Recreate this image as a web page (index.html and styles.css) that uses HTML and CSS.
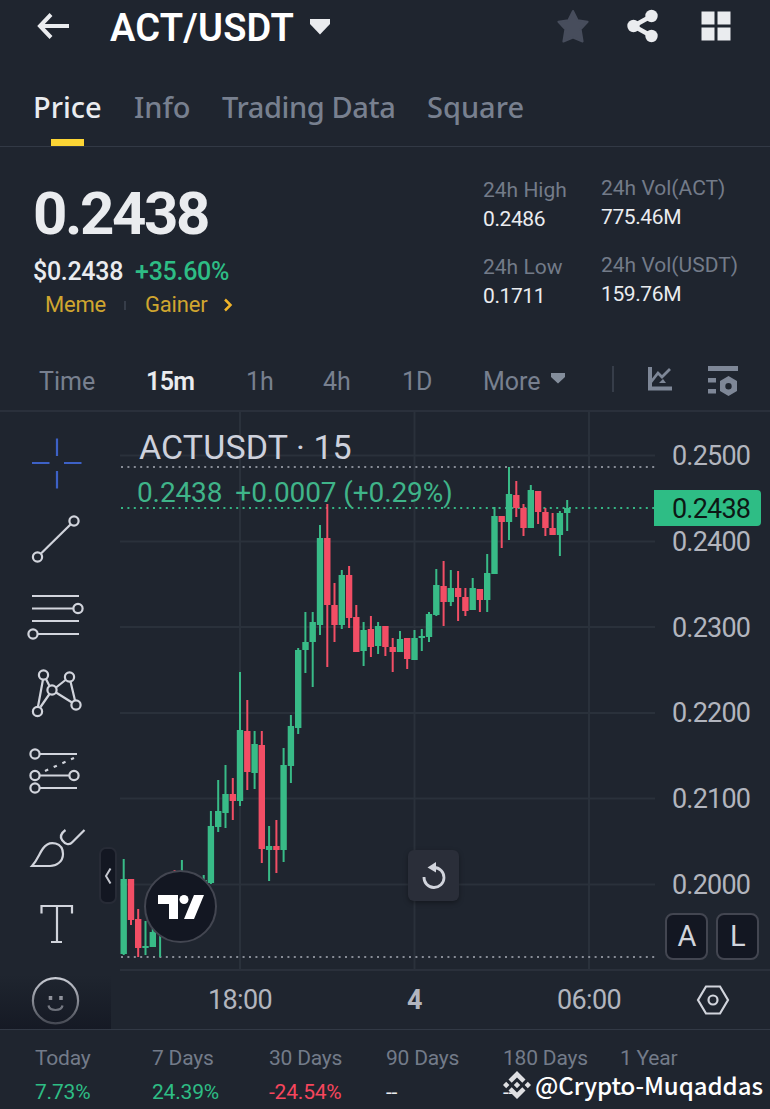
FILE: index.html
```html
<!DOCTYPE html>
<html lang="en">
<head>
  <meta charset="UTF-8">
  <meta name="viewport" content="width=device-width, initial-scale=1.0">
  <title>ACT/USDT</title>
  <link rel="stylesheet" href="styles.css">
</head>
<body>
  <header class="topbar">
    <svg class="back" width="34" height="26" viewBox="0 0 34 26"><path d="M15 1.500L4 13l11 11.500M4 13h29" fill="none" stroke="#eaecef" stroke-width="4"/></svg>
    <h1>ACT/USDT</h1>
    <svg class="caret" width="20" height="16" viewBox="0 0 20 16"><path d="M0 0h20v5L10 15.500 0 5z" fill="#eaecef"/></svg>
    <div class="actions">
      <svg width="34" height="34" viewBox="0 0 34 34"><path d="M17 2l4.600 9.300 10 1.500-7 7.400 2 12.300L17 28.500 7.400 32.500l2-12.300-7-7.400 10-1.500z" fill="#474d5c" stroke="#474d5c" stroke-width="2" stroke-linejoin="round"/></svg>
      <svg width="34" height="34" viewBox="0 0 34 34"><g fill="#eaecef"><circle cx="26.500" cy="7" r="6.200"/><circle cx="8.500" cy="17" r="6.200"/><circle cx="26.500" cy="27" r="6.200"/></g><path d="M26.500 7l-18 10 18 10" fill="none" stroke="#eaecef" stroke-width="4.500"/></svg>
      <svg width="30" height="30" viewBox="0 0 30 30" fill="#eaecef"><path d="M.5.5h13v13H.5zM16.500.5h13v13h-13zM.5 16.500h13v13H.5zM16.500 16.500h13v13h-13z"/></svg>
    </div>
  </header>

  <nav class="tabs">
    <a class="tab active">Price</a>
    <a class="tab info">Info</a>
    <a class="tab trading">Trading Data</a>
    <a class="tab square">Square</a>
  </nav>

  <section class="summary">
    <div class="price">
      <div class="last">0.2438</div>
      <div class="fiat"><span class="usd">$0.2438</span><span class="up">+35.60%</span></div>
      <div class="tags">
        <span>Meme</span><i></i><span>Gainer</span>
        <svg width="10" height="14" viewBox="0 0 10 14"><path d="M2 1.500L7.500 7 2 12.500" fill="none" stroke="#f0b429" stroke-width="2.500"/></svg>
      </div>
    </div>
    <dl class="high-low">
      <dt class="dt-high">24h High</dt><dd>0.2486</dd>
      <dt class="dt-low">24h Low</dt><dd>0.1711</dd>
    </dl>
    <dl class="volume">
      <dt>24h Vol(ACT)</dt><dd>775.46M</dd>
      <dt>24h Vol(USDT)</dt><dd>159.76M</dd>
    </dl>
  </section>

  <nav class="intervals">
    <span class="iv-time">Time</span>
    <span class="iv-15m">15m</span>
    <span class="iv-1h">1h</span>
    <span class="iv-4h">4h</span>
    <span class="iv-1d">1D</span>
    <span class="iv-more">More</span>
    <svg class="more-caret" width="14" height="11" viewBox="0 0 14 11"><path d="M0 0h14v4L7 10.500 0 4z" fill="#848e9c"/></svg>
    <i class="divider"></i>
    <svg class="indicator" width="24" height="24" viewBox="0 0 24 24"><path d="M2 0v22M0 21.500h24" fill="none" stroke="#7e8797" stroke-width="4"/><path d="M3 15l7-9 4 4 8-8" fill="none" stroke="#7e8797" stroke-width="2.800"/><path d="M11 16l4-4 3 4z" fill="#7e8797"/></svg>
    <svg width="30" height="31" viewBox="0 0 30 31"><path d="M0 0h30v5H0zM0 12h8v4.500H0zM0 23h8v4.500H0z" fill="#7e8797"/><path d="M20.500 10l8.500 5v10l-8.500 5-8.500-5V15zM20.500 17a3.200 3.200 0 100 6.400 3.200 3.200 0 000-6.400z" fill="#7e8797" fill-rule="evenodd"/></svg>
  </nav>

  <main class="chart">
    <aside class="tools">
      <svg viewBox="0 0 111 77"><path class="cross" d="M57 14.500V32M57 47v17.500M32 39h17.500M64 39h17.500"/></svg>
      <svg viewBox="0 0 111 77"><path d="M41 52.500l29.500-29"/><circle cx="37.500" cy="56" r="4.600"/><circle cx="74" cy="20" r="4.600"/></svg>
      <svg viewBox="0 0 111 77"><path d="M32 18h47M32 30.500h41.500M32 43h47M37.500 56H79"/><circle cx="78" cy="30.500" r="4.600"/><circle cx="33" cy="56" r="4.600"/></svg>
      <svg viewBox="0 0 111 77"><path d="M43 24.500L38 51.500M46 24l3.500 7M49.500 39L40.500 52M56 32.500l9.500-7.500M56 37.500l16 10M70.500 26.500L75 45.500"/><circle cx="43.500" cy="20" r="4.600"/><circle cx="69.500" cy="22" r="4.600"/><circle cx="52" cy="35" r="4.600"/><circle cx="76" cy="50" r="4.600"/><circle cx="37.500" cy="56.500" r="4.600"/></svg>
      <svg viewBox="0 0 111 77"><path d="M39.500 22H77M39.500 43.500h30M39.500 56H77"/><path d="M45 39l29-13" stroke-dasharray="3.500 6"/><circle cx="35" cy="22" r="4.600"/><circle cx="35" cy="43.500" r="4.600"/><circle cx="74" cy="43.500" r="4.600"/><circle cx="35" cy="56" r="4.600"/></svg>
      <svg viewBox="0 0 111 77"><path d="M32 57C38 50 39 45 43 39.500C50 30 63 34 63 45C63 53 56 57 50 57ZM65.500 21C60 25 60 28 62 31C65 35 69 37 72.500 33L84.500 21"/></svg>
      <svg viewBox="0 0 111 77"><path d="M41.500 27.500V20H72v7.500M57 20v36M51 56h11"/></svg>
      <svg viewBox="0 0 111 77"><circle cx="55.500" cy="37.700" r="22.600"/><path d="M48.500 42.500c1 6 13 6 14 0"/><path d="M50.500 33v4M61 33v4" stroke-width="3.500"/></svg>
    </aside>

    <div class="plot">
      <svg id="candles" viewBox="120 412 535 557">
        <path class="grid" d="M120 455.500h535M120 541.500h535M120 627h535M120 713h535M120 798.500h535M120 884.500h535M240 412v557M414.500 412v557M589 412v557"/>
        <path class="range" d="M121 467h534M121 957h534"/>
        <path class="current" d="M121 508h534"/>
      </svg>
      <div class="legend">
        <div class="symbol">ACTUSDT · 15</div>
        <div class="change"><span>0.2438</span><span>+0.0007 (+0.29%)</span></div>
      </div>
      <div class="collapse"><svg width="8" height="18" viewBox="0 0 8 18"><path d="M6.500 1.500L2 9l4.500 7.500" fill="none" stroke="#c5c8d0" stroke-width="2"/></svg></div>
      <div class="tv-logo"><svg width="46" height="24" viewBox="0 0 46 24" fill="#fff"><path d="M0 0h20v24H11V9H0z"/><circle cx="26" cy="4.500" r="4.500"/><path d="M36 0h10L36 24H26z"/></svg></div>
      <div class="reset"><svg width="26" height="28" viewBox="0 0 26 28"><path d="M3 15a10 10 0 1010-9.500" fill="none" stroke="#d1d4dc" stroke-width="2.800"/><path d="M6.500 5.500L15 0v10.500z" fill="#d1d4dc"/></svg></div>
    </div>

    <div class="price-axis">
      <span>0.2500</span><span>0.2400</span><span>0.2300</span><span>0.2200</span><span>0.2100</span><span>0.2000</span>
      <div class="scale-buttons"><b>A</b><b>L</b></div>
      <div class="current-price">0.2438</div>
    </div>

    <div class="time-axis">
      <span>18:00</span><span class="day">4</span><span>06:00</span>
    </div>
    <div class="axis-settings"><svg width="34" height="30" viewBox="0 0 34 30" fill="none" stroke="#d1d4dc" stroke-width="2.200"><path d="M10 1.500h14L32 15l-8 13.500H10L2 15z"/><circle cx="17" cy="15" r="4.500"/></svg></div>
  </main>

  <footer class="periods">
    <div><span>Today</span><b class="up">7.73%</b></div>
    <div><span>7 Days</span><b class="up">24.39%</b></div>
    <div><span>30 Days</span><b class="down">-24.54%</b></div>
    <div><span>90 Days</span><b>--</b></div>
    <div><span>180 Days</span><b>--</b></div>
    <div><span>1 Year</span><b>--</b></div>
    <div class="watermark">
      <svg width="28" height="28" viewBox="0 0 28 28" fill="#dedfe2"><path d="M14 0l8.500 8.500-3.200 3.200L14 6.400l-5.300 5.300-3.200-3.200zM14 28l8.500-8.500-3.200-3.200L14 21.600l-5.300-5.300-3.200 3.200zM3.200 10.800L6.400 14l-3.200 3.200L0 14zM24.800 10.800L28 14l-3.200 3.200-3.200-3.200zM14 10.800l3.200 3.200-3.200 3.200-3.200-3.200z"/></svg>
      <span>@Crypto-Muqaddas</span>
    </div>
  </footer>

  <script>
    // [body top, body bottom, wick top, wick bottom, up?] for each 15m candle
    const candles = [
      [879,954,859,955,1],[879,920,879,925,0],[919,948,909,957,0],[946,948,921,955,1],
      [932,947,915,947,1],[905,925,900,957,1],[900,910,895,915,0],[880,900,870,905,0],
      [878,900,860,905,1],[885,900,880,910,0],[888,900,882,910,1],[880,890,875,895,1],
      [826,883,811,884,1],[811,827,780,832,1],[794,813,765,828,1],[794,801,778,820,0],
      [730,801,672,806,1],[731,772,700,790,0],[744,773,731,789,1],[745,849,731,863,0],
      [846,850,826,881,1],[846,850,820,873,0],[765,850,748,862,1],[726,766,715,783,1],
      [650,728,648,734,1],[642,650,612,673,1],[622,642,612,687,1],[538,625,525,635,1],
      [538,605,504,667,0],[605,625,583,642,0],[575,625,570,629,1],[575,618,566,628,0],
      [617,652,605,652,0],[630,651,622,666,1],[629,647,616,657,0],[626,646,622,654,1],
      [626,647,626,656,0],[647,652,638,672,0],[639,652,631,652,1],[638,659,638,669,0],
      [638,660,630,660,1],[636,638,629,651,1],[614,637,612,642,1],[585,615,569,616,1],
      [586,602,561,626,0],[588,602,570,606,1],[588,597,571,621,0],[597,611,588,616,0],
      [588,610,578,610,1],[589,600,589,612,0],[573,600,554,612,1],[516,574,507,574,1],
      [516,522,516,548,0],[494,522,467,540,1],[495,508,481,517,0],[508,528,504,536,0],
      [490,528,485,528,1],[491,512,491,524,0],[512,528,508,536,0],[528,535,513,535,0],
      [513,535,511,556,1],[508,513,500,531,1]
    ];
    let shapes = '';
    candles.forEach((c, i) => {
      const x = 123.7 + 7.27 * i;
      shapes += `<g class="${c[4] ? 'rise' : 'fall'}">
        <rect x="${(x - 1).toFixed(1)}" y="${c[2]}" width="2" height="${c[3] - c[2]}"/>
        <rect x="${(x - 3.2).toFixed(1)}" y="${c[0]}" width="6.4" height="${c[1] - c[0]}"/></g>`;
    });
    document.getElementById('candles').innerHTML += shapes;
  </script>
</body>
</html>
```

FILE: styles.css
```css
* { box-sizing: border-box; }
body { margin: 0; width: 770px; height: 1109px; overflow: hidden; background: #1f252f; color: #eaecef; font-family: Roboto, sans-serif; }
svg { display: block; flex: none; }
h1, dl, dt, dd { margin: 0; font-weight: 400; }
.up { color: #2ebd85; }
.down { color: #f6465d; }

.topbar { display: flex; align-items: center; height: 54px; padding: 0 39px 2px 36px; }
.topbar h1 { margin-left: 40px; width: 200px; font-size: 38px; line-height: 54px; font-weight: 600; color: #fff; letter-spacing: .2px; padding-top: 4px; }
.caret { margin-top: 2px; }
.actions { display: flex; align-items: center; margin-left: auto; gap: 35px; }
.actions svg:last-child { margin-left: 7px; }

.tabs { display: flex; height: 93px; padding-left: 33px; border-bottom: 1px solid #323945; font-family: "Noto Sans", sans-serif; font-size: 29px; line-height: 40px; font-weight: 500; color: #78808f; }
.tab { display: flex; flex-direction: column; justify-content: space-between; padding-top: 33px; white-space: nowrap; }
.tab.active { width: 68px; margin-right: 33px; color: #eaecef; }
.tab.active::after { content: ""; width: 33px; height: 7px; align-self: center; background: #fcd535; }
.info { width: 88px; }
.trading { width: 205px; letter-spacing: -.4px; }

.summary { display: flex; height: 203px; padding-left: 33px; }
.price { width: 450px; padding-top: 32px; }
.last { font-size: 60px; line-height: 70px; font-weight: 700; letter-spacing: -2.4px; }
.fiat { display: flex; gap: 12px; margin-top: 8px; font-size: 25px; line-height: 30px; font-weight: 500; letter-spacing: -.3px; }
.tags { display: flex; align-items: center; margin: 5px 0 0 12px; font-size: 22px; line-height: 26px; color: #d0a62f; letter-spacing: -.2px; }
.tags i { width: 2px; height: 9px; margin: 0 19px 0 18px; background: #363d49; }
.tags svg { margin-left: 16px; }
.high-low { width: 118px; padding-top: 29px; }
.volume { padding-top: 27px; }
.summary dt { font-size: 21px; line-height: 28px; color: #737b89; white-space: nowrap; }
.summary dd { font-size: 21px; line-height: 31px; margin-bottom: 18px; letter-spacing: -.4px; }

.intervals { display: flex; align-items: center; height: 62px; padding: 2px 0 0 39px; border-bottom: 2px solid #2a303b; font-size: 25px; color: #78808f; }
.iv-time { width: 107px; }
.iv-15m { width: 100px; font-weight: 600; color: #eaecef; letter-spacing: -.6px; }
.iv-1h { width: 77px; }
.iv-4h { width: 79px; }
.iv-1d { width: 81px; }
.iv-more { width: 68px; }
.more-caret { margin-top: -5px; }
.divider { width: 2px; height: 26px; margin: -4px 34px 0 47px; background: #363d49; }
.indicator { margin: -4px 36px 0 0; }

.chart { display: grid; grid-template: 557px 60px / 120px 535px 115px; height: 618px; border-bottom: 1px solid #323945; }
.tools { position: relative; grid-row: 1 / 3; width: 111px; padding-top: 12px; overflow: hidden; }
.tools svg { width: 111px; height: 77px; fill: none; stroke: #d1d4dc; stroke-width: 2.2; }
.tools .cross { stroke: #3d61c6; }
.tools::after { content: ""; position: absolute; left: 0; right: 0; bottom: 0; height: 54px; background: linear-gradient(#13172200, #131722d0); }
.plot { position: relative; }
#candles { width: 535px; height: 557px; }
.grid { stroke: #2a313b; stroke-width: 2; fill: none; }
.range { stroke: #878c96; stroke-width: 2; stroke-dasharray: 2 4.4; }
.current { stroke: #35b584; stroke-width: 2; stroke-dasharray: 2 4.4; }
.rise { fill: #38bb87; }
.fall { fill: #f24e65; }
.legend { position: absolute; left: 17px; top: 13px; white-space: nowrap; }
.symbol { padding-left: 2px; font-size: 34px; line-height: 44px; color: #ced1dc; letter-spacing: .1px; }
.change { display: flex; gap: 13px; font-size: 28px; line-height: 48px; color: #3fb489; letter-spacing: -.12px; }
.collapse { position: absolute; left: -21px; top: 435px; display: flex; align-items: center; justify-content: center; width: 18px; height: 57px; border: 2px solid #272b36; border-radius: 7px; background: #131722; }
.tv-logo { position: absolute; left: 24px; top: 458px; display: flex; align-items: center; justify-content: center; width: 73px; height: 73px; border: 2px solid #434651; border-radius: 50%; background: #131722; }
.reset { position: absolute; left: 288px; top: 438px; display: flex; align-items: center; justify-content: center; width: 51px; height: 51px; border-radius: 6px; background: #2a2e39; box-shadow: 0 2px 5px rgba(0,0,0,.35); }

.price-axis { position: relative; padding: 1px 0 0 17px; font-size: 27px; line-height: 86px; color: #b2b5be; letter-spacing: -.8px; }
.price-axis span { display: block; height: 85.8px; }
.scale-buttons { display: flex; gap: 8px; margin: -15px 0 0 -7px; }
.scale-buttons b { width: 43px; height: 47px; border: 2px solid #434651; border-radius: 8px; background: #131722; color: #d1d4dc; font-size: 29px; line-height: 43px; font-weight: 400; text-align: center; }
.current-price { position: absolute; left: -1px; top: 78px; width: 107px; height: 36px; padding-left: 18px; line-height: 38px; border-radius: 0 4px 4px 0; background: #2ebd85; color: #0d1815; }
.time-axis { display: grid; grid-template-columns: 240px 109px 240px; border-top: 2px solid #2a303b; font-size: 27px; line-height: 58px; color: #b2b5be; text-align: center; letter-spacing: -.6px; }
.time-axis .day { font-weight: 700; }
.axis-settings { display: flex; align-items: center; justify-content: center; border-top: 2px solid #2a303b; }

.periods { position: relative; display: grid; grid-template-columns: repeat(6, 117px); height: 79px; padding: 15px 0 0 35px; font-size: 21px; letter-spacing: -.2px; }
.periods span { display: block; line-height: 26px; color: #737b89; }
.periods b { display: block; margin-top: 8px; line-height: 26px; font-weight: 400; }
.watermark { position: absolute; left: 503px; top: 41px; display: flex; align-items: center; gap: 4px; letter-spacing: 0; }
.periods .watermark span { font-family: "Noto Sans CJK SC", sans-serif; font-size: 24px; line-height: 28px; font-weight: 500; color: #fff; letter-spacing: -.05px; }
```
